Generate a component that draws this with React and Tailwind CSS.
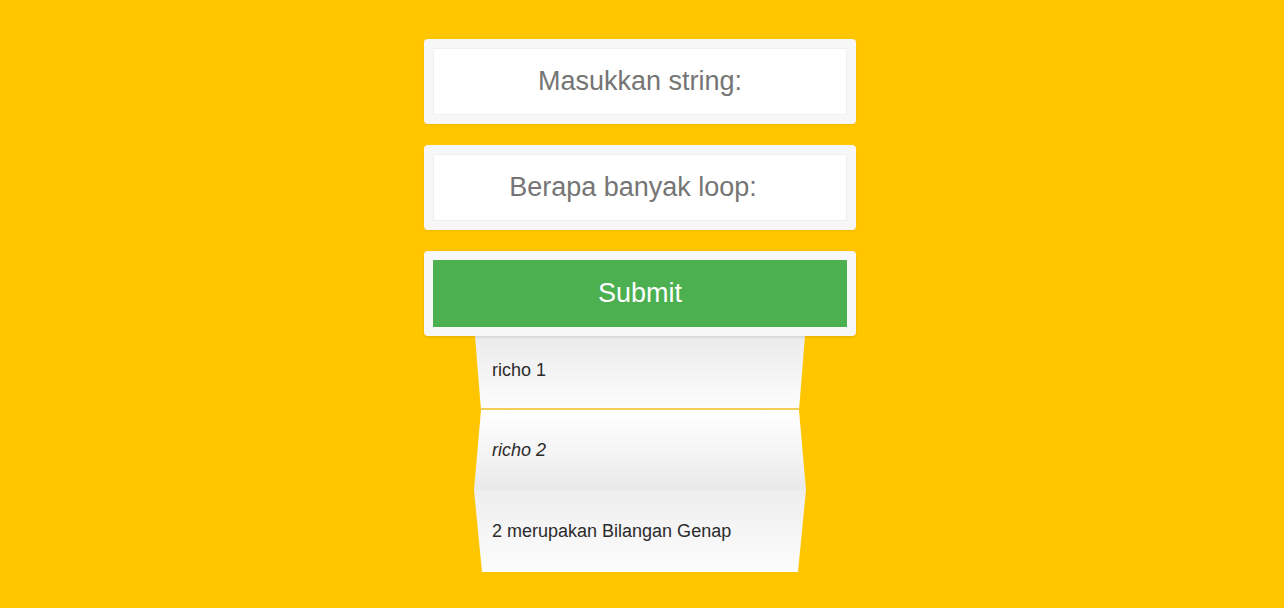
import React from 'react';

export default function App() {
    return (
        <div className="min-h-screen bg-[#ffc600] pt-[39px] pr-[4px] font-['Liberation_Sans',Arial,sans-serif]">
            <div className="mx-auto w-[432px] flex flex-col gap-[21px]">
                {/* Input string */}
                <div className="bg-[#f7f7f7] rounded-[4px] p-[9px] shadow-[0_1px_2px_rgba(0,0,0,0.08)]">
                    <div className="h-[67px] bg-white border border-[#efefef] flex items-center justify-center text-[27px] text-[#757575]">
                        Masukkan string:
                    </div>
                </div>
                {/* Jumlah loop */}
                <div className="bg-[#f7f7f7] rounded-[4px] p-[9px] shadow-[0_1px_2px_rgba(0,0,0,0.08)]">
                    <div className="h-[67px] bg-white border border-[#efefef] flex items-center justify-center pr-[14px] text-[27px] text-[#757575]">
                        Berapa banyak loop:
                    </div>
                </div>
                {/* Tombol */}
                <div className="relative z-10 bg-[#f7f7f7] rounded-[4px] p-[9px] shadow-[0_1px_3px_rgba(0,0,0,0.12)]">
                    <button className="w-full h-[67px] bg-[#4caf50] flex items-center justify-center text-[27px] text-white">
                        Submit
                    </button>
                </div>
            </div>

            {/* Hasil lipatan */}
            <div className="mx-auto w-[332px] flex flex-col text-[18px] text-[#2b2b2b]">
                <div className="relative h-[74px] flex items-center pl-[18px] pb-[6px] bg-linear-to-b from-[#ebebeb] to-[#fdfdfd] [clip-path:polygon(1px_0,calc(100%_-_1px)_0,calc(100%_-_7px)_100%,7px_100%)]">
                    richo 1
                    <div className="absolute left-0 right-0 bottom-0 h-[2px] bg-[#f2cd57]"></div>
                </div>
                <div className="h-[80px] flex items-center pl-[18px] italic bg-linear-to-b from-[#ffffff] via-[#f5f5f5] to-[#e9e9e9] [clip-path:polygon(7px_0,calc(100%_-_7px)_0,100%_100%,0_100%)]">
                    richo 2
                </div>
                <div className="h-[82px] flex items-center pl-[18px] bg-linear-to-b from-[#eeeeee] to-[#fdfdfd] [clip-path:polygon(0_0,100%_0,calc(100%_-_8px)_100%,8px_100%)]">
                    2 merupakan Bilangan Genap
                </div>
            </div>
        </div>
    );
}
